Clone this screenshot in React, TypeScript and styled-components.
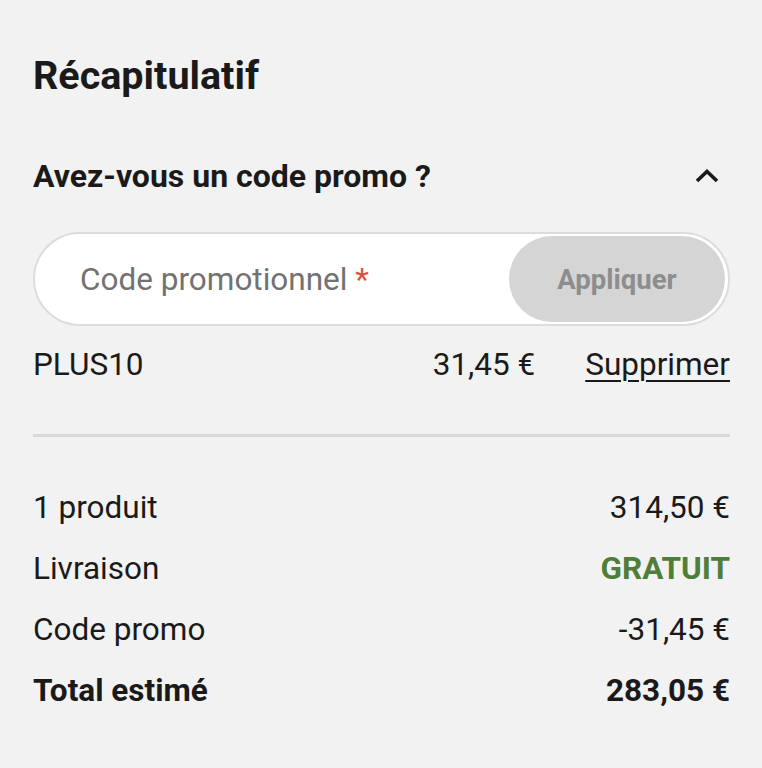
import * as React from 'react'
import styled, { createGlobalStyle } from 'styled-components'

const Global = createGlobalStyle`
  html, body {
    margin: 0;
    padding: 0;
    background: #f2f2f2;
  }
  body {
    font-family: Roboto, "Liberation Sans", sans-serif;
    color: #1a1a1a;
  }
`

const Page = styled.div`
  padding: 50px 32px 40px 33px;
  box-sizing: border-box;
  width: 762px;
  min-height: 768px;
`

const Title = styled.h1`
  margin: 0;
  font-size: 39.5px;
  font-weight: 700;
  line-height: 52px;
`

const PromoHeader = styled.div`
  display: flex;
  align-items: center;
  justify-content: space-between;
  margin-top: 54px;
  height: 40px;
  h2 {
    margin: 0;
    font-size: 32px;
    font-weight: 700;
  }
  svg {
    margin-right: 10px;
  }
`

const PromoField = styled.div`
  display: flex;
  align-items: center;
  margin-top: 36px;
  height: 94px;
  box-sizing: border-box;
  background: #fff;
  border: 2px solid #dcdcdc;
  border-radius: 47px;
  padding: 0 3px 0 45px;
`

const Placeholder = styled.span`
  flex: 1;
  font-size: 31.5px;
  color: #727272;
  span {
    color: #d9533f;
  }
`

const ApplyButton = styled.button`
  width: 216px;
  height: 86px;
  border: none;
  border-radius: 43px;
  background: #d5d5d5;
  color: #8d8d8d;
  font-family: inherit;
  font-size: 27.5px;
  font-weight: 700;
`

const CodeRow = styled.div`
  display: flex;
  align-items: center;
  height: 76px;
  font-size: 31.5px;
`

const CodeName = styled.span`
  flex: 1;
`

const Remove = styled.a`
  margin-left: 50px;
  text-decoration: underline;
  text-underline-offset: 5px;
  text-decoration-thickness: 2px;
  color: #1a1a1a;
`

const Divider = styled.hr`
  margin: 32px 0 40px;
  border: none;
  height: 3px;
  background: #d9d9d9;
`

const Row = styled.div<{ $bold?: boolean }>`
  display: flex;
  justify-content: space-between;
  align-items: center;
  height: 61px;
  font-size: 31.5px;
  font-weight: ${p => (p.$bold ? 700 : 400)};
`

const Free = styled.span`
  color: #4f7e39;
  font-weight: 700;
`

export default function App() {
  return (
    <Page>
      <Global />
      <Title>Récapitulatif</Title>
      <PromoHeader>
        <h2>Avez-vous un code promo ?</h2>
        <svg width="26" height="16" viewBox="0 0 26 16" fill="none">
          <path d="M3 13 L13 3.5 L23 13" stroke="#1a1a1a" strokeWidth="3.6" />
        </svg>
      </PromoHeader>
      <PromoField>
        <Placeholder>
          Code promotionnel <span>*</span>
        </Placeholder>
        <ApplyButton>Appliquer</ApplyButton>
      </PromoField>
      <CodeRow>
        <CodeName>PLUS10</CodeName>
        <span>31,45 €</span>
        <Remove>Supprimer</Remove>
      </CodeRow>
      <Divider />
      <Row>
        <span>1 produit</span>
        <span>314,50 €</span>
      </Row>
      <Row>
        <span>Livraison</span>
        <Free>GRATUIT</Free>
      </Row>
      <Row>
        <span>Code promo</span>
        <span>-31,45 €</span>
      </Row>
      <Row $bold>
        <span>Total estimé</span>
        <span>283,05 €</span>
      </Row>
    </Page>
  )
}
